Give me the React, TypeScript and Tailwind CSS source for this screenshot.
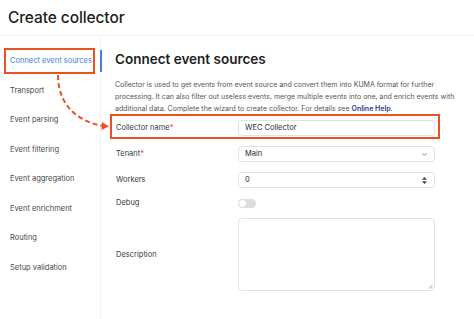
import { ChevronDown } from "lucide-react"

const steps = [
    "Connect event sources",
    "Transport",
    "Event parsing",
    "Event filtering",
    "Event aggregation",
    "Event enrichment",
    "Routing",
    "Setup validation",
]

const Label = ({ text, required }: { text: string; required?: boolean }) => (
    <div className="w-[122px] shrink-0 text-[7.5px] text-[#3a3a3a]">
        {text}
        {required && <span className="text-[#e0473a]">*</span>}
    </div>
)

export default function App() {
    return (
        <div className="relative w-[474px] h-[319px] overflow-hidden bg-white font-['Inter',sans-serif]">
            <div className="h-[36px] flex items-center px-[8px] border-b border-[#f3f3f3]">
                <h1 className="text-[15.5px] font-medium text-[#1d1d1b] tracking-[-0.1px]">Create collector</h1>
            </div>

            <div className="flex h-[283px]">
                {/* steps */}
                <div className="relative w-[101px] shrink-0 border-r border-[#f1f1f1] pt-[10px]">
                    {steps.map((step, idx) => (
                        <div
                            key={step}
                            className={`relative h-[29.5px] flex items-center pl-[10px] text-[7.5px] ${idx === 0 ? "text-[#3f80de]" : "text-[#474747]"}`}
                        >
                            {step}
                            {idx === 0 && (
                                <>
                                    <div className="absolute left-[4px] top-[1.5px] w-[91px] h-[26px] border-2 border-[#e9521f]" />
                                    <div className="absolute right-[-1.5px] top-[3.5px] w-[2px] h-[22px] bg-[#3f80de]" />
                                </>
                            )}
                        </div>
                    ))}
                </div>

                {/* form */}
                <div className="flex-1 pl-[14px] pt-[15px]">
                    <h2 className="text-[13.5px] font-semibold text-[#1d1d1b] leading-[16px]">Connect event sources</h2>
                    <p className="mt-[12px] w-[350px] text-[7px] leading-[12px] text-[#555]">
                        Collector is used to get events from event source and convert them into KUMA format for further processing. It can also filter out useless events, merge multiple events into one, and enrich events with additional data. Complete the wizard to create collector. For details see{" "}
                        <span className="font-semibold text-[#2b3a98]">Online Help</span>.
                    </p>

                    <div className="mt-[5px] flex flex-col">
                        <div className="relative flex items-center h-[16px] pl-[1px]">
                            <Label text="Collector name" required />
                            <div className="w-[197px] h-[16px] flex items-center px-[6px] rounded-[4px] border border-[#e2e2e2] text-[7.5px] text-[#2a2a2a]">
                                WEC Collector
                            </div>
                            <div className="absolute left-[-5px] top-[-6px] w-[330px] h-[25px] border-2 border-[#e9521f]" />
                        </div>

                        <div className="mt-[10px] flex items-center h-[16px] pl-[1px]">
                            <Label text="Tenant" required />
                            <div className="w-[197px] h-[16px] flex items-center justify-between px-[6px] rounded-[4px] border border-[#e2e2e2] text-[7.5px] text-[#2a2a2a]">
                                Main
                                <ChevronDown size={7} strokeWidth={2.5} className="text-[#555]" />
                            </div>
                        </div>

                        <div className="mt-[10px] flex items-center h-[16px] pl-[1px]">
                            <Label text="Workers" />
                            <div className="w-[197px] h-[16px] flex items-center justify-between px-[6px] rounded-[4px] border border-[#e2e2e2] text-[7.5px] text-[#2a2a2a]">
                                0
                                <svg width="5" height="7" viewBox="0 0 5 7" className="mr-[1px]">
                                    <path d="M2.5 0 L5 2.8 H0 Z M2.5 7 L5 4.2 H0 Z" fill="#444" />
                                </svg>
                            </div>
                        </div>

                        <div className="mt-[10px] flex items-center h-[10px] pl-[1px]">
                            <Label text="Debug" />
                            <div className="relative w-[18px] h-[9px] rounded-full bg-[#dcdcdc]">
                                <div className="absolute left-0 top-0 w-[9px] h-[9px] rounded-full bg-white border border-[#dcdcdc]" />
                            </div>
                        </div>

                        <div className="mt-[10px] flex items-center h-[73px] pl-[1px]">
                            <Label text="Description" />
                            <div className="relative w-[197px] h-[73px] rounded-[4px] border border-[#e2e2e2]">
                                <svg width="5" height="5" viewBox="0 0 5 5" className="absolute right-[1px] bottom-[1px]">
                                    <path d="M4.5 0.5 L0.5 4.5 M4.5 2.5 L2.5 4.5" stroke="#999" strokeWidth="0.7" />
                                </svg>
                            </div>
                        </div>
                    </div>
                </div>
            </div>

            {/* annotation arrow */}
            <svg className="absolute left-0 top-0 pointer-events-none" width="474" height="319" viewBox="0 0 474 319">
                <path d="M58 75 C 58 104, 76 121, 103 126" fill="none" stroke="#e9521f" strokeWidth="2" strokeDasharray="5 3" />
                <path d="M102 122 L109 126.5 L101.5 130 Z" fill="#e9521f" />
            </svg>
        </div>
    )
}
